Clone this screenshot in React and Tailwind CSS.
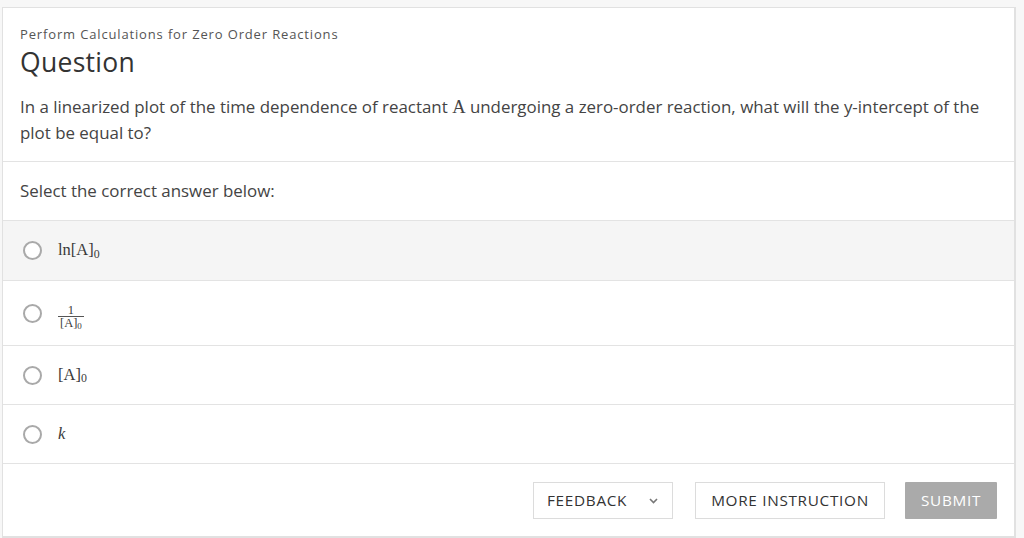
import { useState } from "react";

const Sub0 = () => <span className="text-[0.72em] relative top-[0.2em] leading-none">0</span>;

const options = [
    { id: "ln", h: "h-[60px]", content: (
        <span>ln[A]<Sub0 /></span>
    ) },
    { id: "inv", h: "h-[65px]", content: (
        <span className="inline-flex flex-col items-center text-[12.5px] leading-[11px] -mt-1">
            <span className="px-[2px]">1</span>
            <span className="border-t border-[#555] px-[2px] pt-[1px]">[A]<Sub0 /></span>
        </span>
    ) },
    { id: "a0", h: "h-[59px]", content: (
        <span>[A]<Sub0 /></span>
    ) },
    { id: "k", h: "h-[59px]", content: <span className="italic">k</span> },
];

const Radio = () => (
    <span className="w-[19px] h-[19px] rounded-full border-2 border-[#a9a9a9] bg-white shrink-0" />
);

export default function App() {
    const [hovered] = useState("ln");

    return (
        <div className="min-h-[538px] bg-[#f7f7f7] pt-[7px] pl-[2px] pr-[8px] pb-[1px]" style={{ fontFamily: '"Open Sans", sans-serif' }}>
            <div className="bg-white border border-[#e1e1e1] border-r-2 border-b-2">
                <div className="px-[17px] pt-[18px] pb-[15px] border-b border-[#e3e3e3]">
                    <div className="text-[13px] tracking-[0.85px] text-[#555] leading-[16px]">Perform Calculations for Zero Order Reactions</div>
                    <h1 className="text-[26.5px] tracking-[0.3px] text-[#333] leading-[34px] mt-[3px]">Question</h1>
                    <p className="text-[16.9px] text-[#444] leading-[26px] mt-[15px]">
                        In a linearized plot of the time dependence of reactant{" "}
                        <span className="inline-block text-[18.5px] leading-[20px]" style={{ fontFamily: '"Liberation Serif", serif' }}>A</span>{" "}
                        undergoing a zero-order reaction, what will the y-intercept of the plot be equal to?
                    </p>
                </div>
                <div className="h-[59px] px-[17px] flex items-center border-b border-[#e3e3e3] text-[16.9px] text-[#444]">
                    Select the correct answer below:
                </div>
                {options.map((opt) => (
                    <div
                        key={opt.id}
                        className={`${opt.h} ${hovered === opt.id ? "bg-[#f5f5f5]" : "bg-white"} flex items-center gap-[16px] pl-[20px] border-b border-[#e3e3e3]`}
                    >
                        <Radio />
                        <span className="text-[16.5px] text-[#3a3a3a]" style={{ fontFamily: '"Liberation Serif", serif' }}>{opt.content}</span>
                    </div>
                ))}
                <div className="flex justify-end items-center pr-[17px] pt-[18px] pb-[17px]">
                    <button className="h-[37px] w-[140px] border border-[#dcdcdc] bg-white flex items-center justify-between pl-[13px] pr-[13px] text-[15.3px] tracking-[0.7px] text-[#333]">
                        <span>FEEDBACK</span>
                        <svg width="9" height="6" viewBox="0 0 9 6" className="mr-[1px]">
                            <path d="M1 1l3.5 3.5L8 1" fill="none" stroke="#777" strokeWidth="1.6" />
                        </svg>
                    </button>
                    <button className="ml-[22px] h-[37px] w-[190px] border border-[#dcdcdc] bg-white text-[15.3px] tracking-[0.7px] text-[#333]">
                        MORE INSTRUCTION
                    </button>
                    <button className="ml-[20px] h-[37px] w-[92px] bg-[#aaaaaa] text-[15.3px] tracking-[0.7px] text-white rounded-[1px]">
                        SUBMIT
                    </button>
                </div>
            </div>
        </div>
    );
}
